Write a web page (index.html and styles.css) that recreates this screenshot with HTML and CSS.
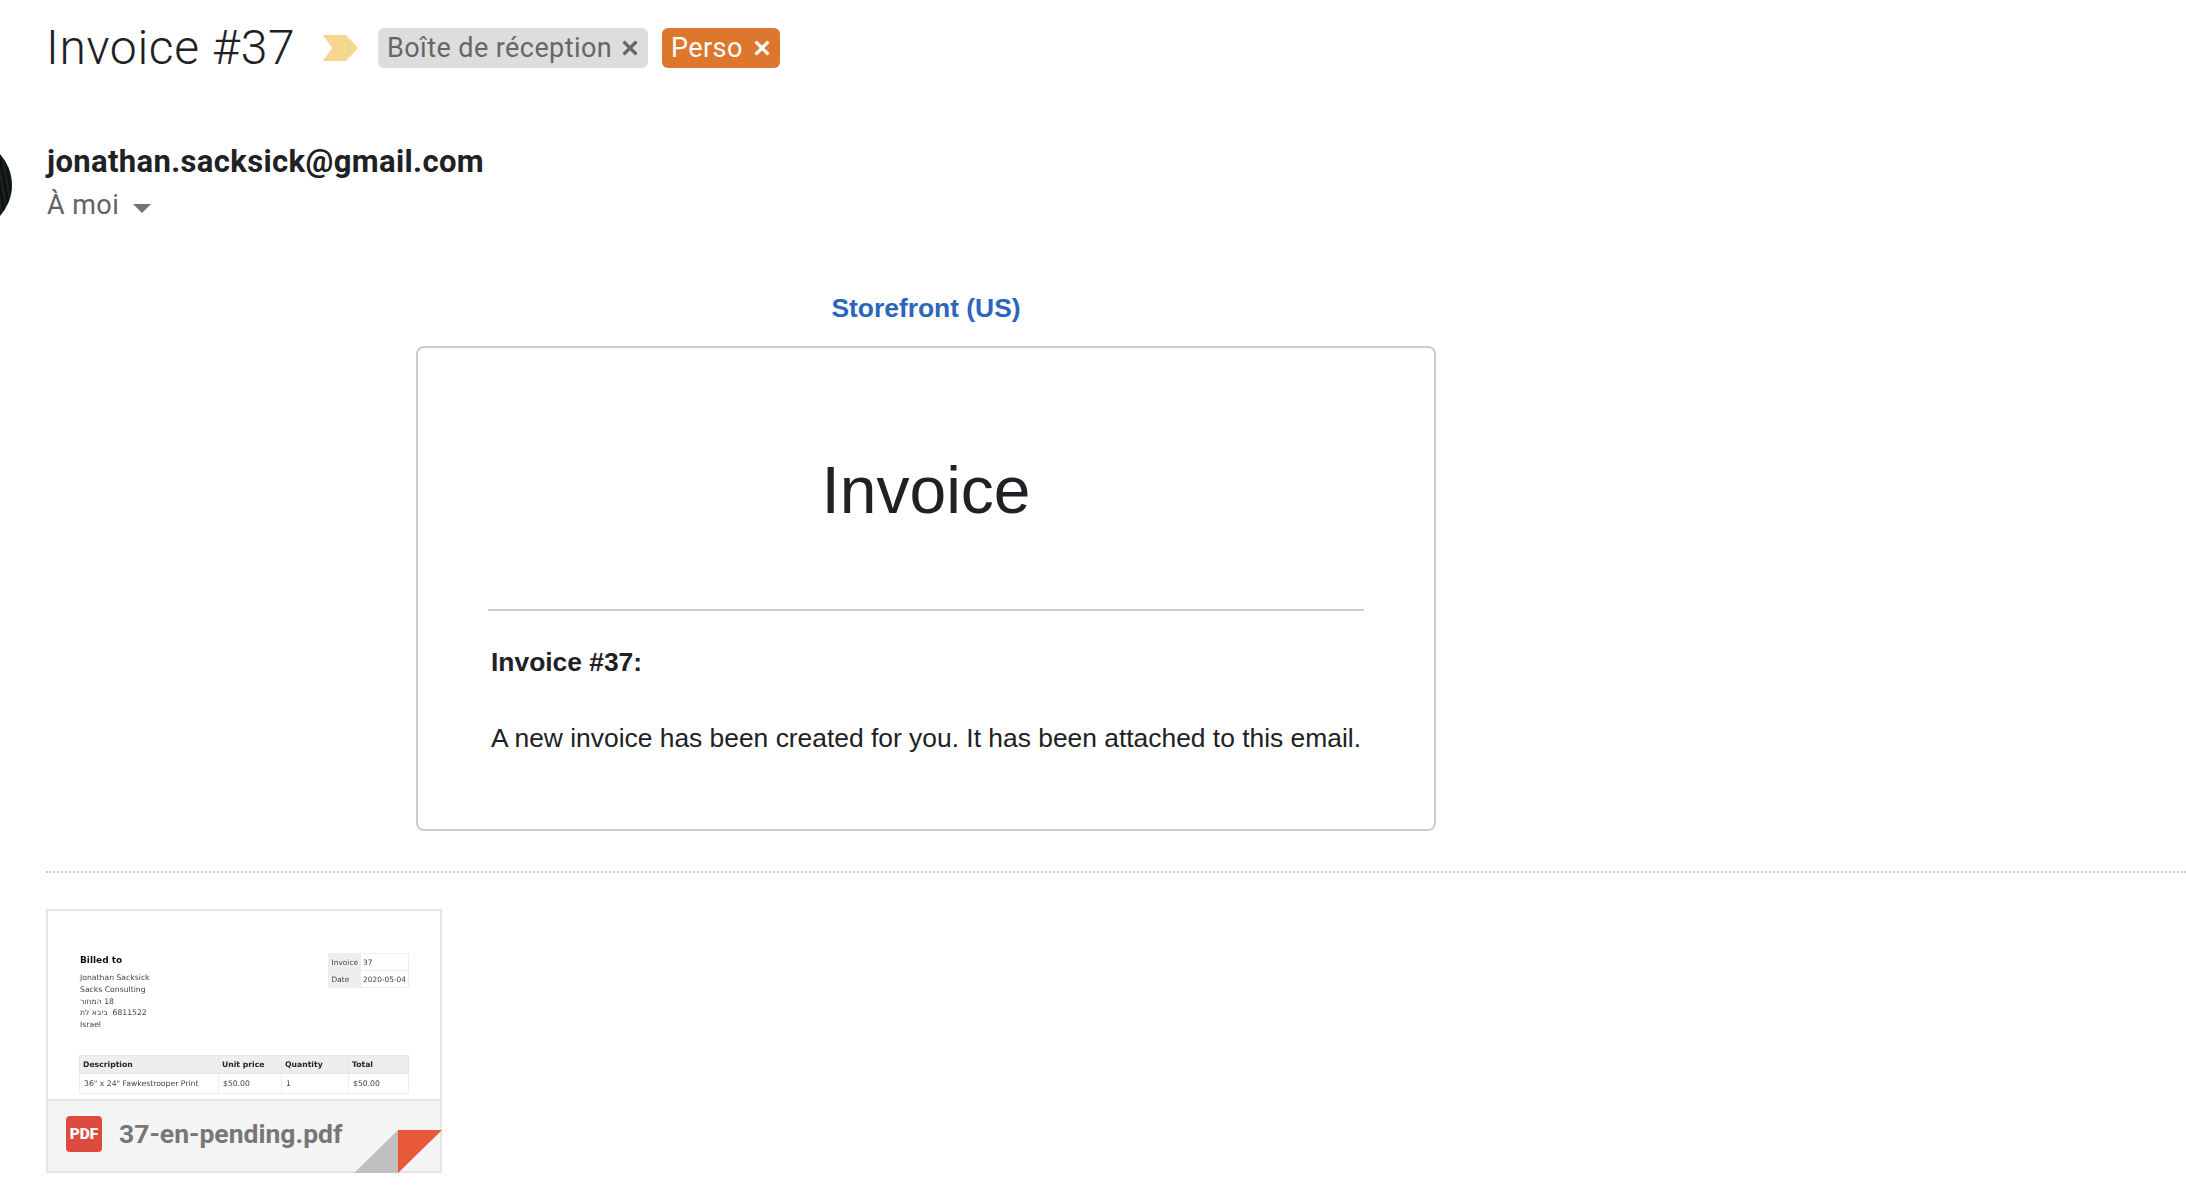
FILE: index.html
```html
<!DOCTYPE html>
<html lang="fr">
<head>
<meta charset="utf-8">
<title>Invoice #37</title>
<link rel="stylesheet" href="styles.css">
</head>
<body>
<main class="mail">
  <header class="subject">
    <h1 class="subject-title">Invoice #37</h1>
    <svg class="marker" viewBox="0 0 35 26" aria-hidden="true"><path d="M0 0H23L35 13L23 26H0L9 13Z"/></svg>
    <span class="tag tag-grey">Boîte de réception<svg class="tag-x" viewBox="0 0 14 14" aria-hidden="true"><path d="M2 2L12 12M12 2L2 12"/></svg></span>
    <span class="tag tag-orange">Perso<svg class="tag-x" viewBox="0 0 14 14" aria-hidden="true"><path d="M2 2L12 12M12 2L2 12"/></svg></span>
  </header>

  <section class="sender">
    <div class="avatar"></div>
    <div class="sender-text">
      <div class="sender-name">jonathan.sacksick@gmail.com</div>
      <div class="sender-to">À moi <span class="caret"></span></div>
    </div>
  </section>

  <section class="body-wrap">
    <a class="store-link">Storefront (US)</a>
    <div class="mail-card">
      <h2 class="card-title">Invoice</h2>
      <hr class="card-rule">
      <p class="card-strong">Invoice #37:</p>
      <p class="card-text">A new invoice has been created for you. It has been attached to this email.</p>
    </div>
  </section>

  <hr class="dotted">

  <section class="attachment">
    <div class="preview">
      <div class="preview-top">
        <div class="billed">
          <div class="billed-title">Billed to</div>
          <div>Jonathan Sacksick</div>
          <div>Sacks Consulting</div>
          <div>המחור&lrm; 18</div>
          <div>ביבא לת&lrm; &nbsp;6811522</div>
          <div>Israel</div>
        </div>
        <table class="meta">
          <tr><th>Invoice</th><td>37</td></tr>
          <tr><th>Date</th><td>2020-05-04</td></tr>
        </table>
      </div>
      <table class="items">
        <tr><th class="c1">Description</th><th class="c2">Unit price</th><th class="c3">Quantity</th><th class="c4">Total</th></tr>
        <tr><td>36" x 24" Fawkestrooper Print</td><td>$50.00</td><td>1</td><td>$50.00</td></tr>
      </table>
    </div>
    <div class="att-footer">
      <span class="pdf-icon">PDF</span>
      <span class="att-name">37-en-pending.pdf</span>
      <svg class="fold" viewBox="0 0 88 43" aria-hidden="true">
        <path class="fold-grey" d="M0 43L44 0V43Z"/>
        <path class="fold-red" d="M44 0H88L44 43Z"/>
      </svg>
    </div>
  </section>
</main>
</body>
</html>
```

FILE: styles.css
```css
html, body {
  margin: 0;
  padding: 0;
  background: #fff;
  height: 1194px;
  overflow: hidden;
}
body { font-family: Roboto, "Liberation Sans", sans-serif; color: #202124; }
.mail { padding: 0 0 0 46px; }

.subject {
  display: flex;
  align-items: center;
  height: 40px;
  padding-top: 28px;
}
.subject-title {
  margin: 0;
  font: 300 48px/40px Roboto, sans-serif;
  letter-spacing: .65px;
  color: #202124;
  width: 277px;
  white-space: nowrap;
}
.marker { width: 35px; height: 26px; fill: #f5d68f; margin-right: 20px; }
.tag {
  display: inline-flex;
  align-items: center;
  justify-content: space-between;
  height: 40px;
  border-radius: 6px;
  font-size: 27px;
  letter-spacing: .42px;
  padding: 0 9px;
  box-sizing: border-box;
  white-space: pre;
}
.tag-grey { background: #dddddd; color: #666; width: 270px; margin-right: 14px; }
.tag-orange { background: #dd772e; color: #fff; width: 118px; }
.tag-x { width: 18px; height: 18px; fill: none; stroke: currentColor; stroke-width: 2.6; flex: none; }

.sender { display: flex; margin: 79px 0 0 -126px; align-items: center; height: 72px; }
.avatar {
  width: 92px; height: 92px; border-radius: 50%;
  background: repeating-linear-gradient(80deg, #0f1412 0 3px, #1c2320 3px 5px);
  margin: 4px 35px 0 0;
  flex: none;
}
.sender-name { font-weight: 700; font-size: 31px; letter-spacing: .36px; line-height: 38px; color: #202124; }
.sender-to { font-size: 27px; letter-spacing: .45px; line-height: 36px; color: #5f6368; display: flex; align-items: center; margin-top: 6px; }
.caret {
  width: 0; height: 0; margin-left: 14px; margin-top: 6px;
  border-left: 9px solid transparent; border-right: 9px solid transparent; border-top: 9px solid #6f7378;
}

.body-wrap {
  width: 1760px;
  display: flex;
  flex-direction: column;
  align-items: center;
  margin-top: 72px;
  font-family: "Liberation Sans", Arial, sans-serif;
}
.store-link { font-weight: 700; font-size: 26.4px; line-height: 34px; color: #2a66bb; }
.mail-card {
  width: 1020px;
  height: 485px;
  box-sizing: border-box;
  margin-top: 21px;
  padding: 0 70px;
  border: 2px solid #cccccc;
  border-radius: 8px;
  color: #202124;
}
.card-title {
  margin: 102px 0 0;
  font-weight: 400;
  font-size: 66px;
  line-height: 80px;
  text-align: center;
}
.card-rule { border: 0; border-top: 2px solid #cccccc; margin: 79px 0 0; }
.card-strong { margin: 33px 0 0 3px; font-weight: 700; font-size: 26.4px; line-height: 36px; }
.card-text { margin: 40px 0 0 3px; font-size: 26.4px; line-height: 36px; white-space: nowrap; }

.dotted { border: 0; border-top: 2px dotted #cccccc; margin: 40px 0 0; }

.attachment {
  width: 396px;
  height: 264px;
  margin-top: 36px;
  box-sizing: border-box;
  border: 2px solid #e5e5e5;
  display: flex;
  flex-direction: column;
  position: relative;
}
.preview {
  flex: 1;
  padding: 42px 31px 0 31px;
  font-family: "DejaVu Sans", sans-serif;
  font-size: 7.7px;
  color: #444;
  filter: blur(0.35px);
}
.preview-top { display: flex; justify-content: space-between; align-items: flex-start; height: 102px; }
.billed { line-height: 11.8px; margin-left: 1px; }
.billed-title { font-weight: 700; font-size: 9px; color: #111; line-height: 14px; margin-bottom: 5px; }
.meta, .items { border-collapse: collapse; font-size: 7.7px; }
.meta { font-size: 7.4px; }
.meta th { font-weight: 400; background: #eeeeee; text-align: left; padding: 0 2px 0 3px; height: 16px; border: 1px solid #eee; }
.meta td { padding: 0 2px; border: 1px solid #eee; height: 16px; }
.items { width: 330px; table-layout: fixed; }
.items th { background: #eeeeee; color: #222; font-weight: 700; text-align: left; height: 17px; padding: 0 3px; border: 1px solid #e6e6e6; }
.items td { height: 19px; padding: 0 4px; border: 1px solid #eeeeee; white-space: nowrap; }
.c1 { width: 132px; } .c2 { width: 56px; } .c3 { width: 60px; }

.att-footer {
  height: 70px;
  background: #f5f5f5;
  border-top: 2px solid #e5e5e5;
  display: flex;
  align-items: center;
  padding-left: 18px;
  position: relative;
}
.pdf-icon {
  width: 36px; height: 36px; border-radius: 4px;
  background: #dd4b3e; color: #fff;
  font: 900 15.5px/36px Roboto, sans-serif;
  text-align: center;
  margin-right: 17px;
  margin-top: -4px;
}
.att-name { font-weight: 700; font-size: 26.5px; color: #777; margin-top: -6px; }
.fold { position: absolute; right: -2px; bottom: -2px; width: 88px; height: 43px; }
.fold-grey { fill: #c0c0c0; }
.fold-red { fill: #e8593c; }
```
